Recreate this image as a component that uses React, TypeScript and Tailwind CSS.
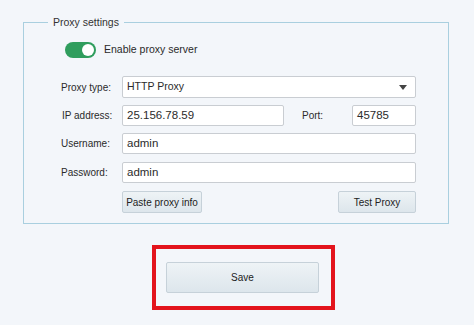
const font = { fontFamily: '"Liberation Sans", Arial, sans-serif' };

const Field = ({ value, className }: { value: string; className: string }) => (
    <div className={`h-[21px] bg-white border border-[#c9cdd2] rounded-[2px] flex items-center px-[4px] text-[11.5px] text-[#2b2b2b] ${className}`}>
        {value}
    </div>
);

const Btn = ({ label, className }: { label: string; className: string }) => (
    <div className={`flex items-center justify-center whitespace-nowrap border border-[#c6d1d9] rounded-[2px] bg-gradient-to-b from-[#eef3f6] to-[#dde6ec] text-[10px] text-[#222] ${className}`}>
        {label}
    </div>
);

const App = () => {
    return (
        <div className="w-[474px] h-[325px] bg-[#f3f6fa] pt-[15px] text-[10px] text-[#2a2a2a]" style={font}>
            <fieldset className="ml-[23px] w-[426px] h-[209px] border border-[#a9cfdf] p-0">
                <legend className="ml-[24px] px-[5px] leading-[14px] text-[10.5px] text-[#333]">Proxy settings</legend>

                <div className="flex items-center ml-[41px] mt-[13px] gap-[8px]">
                    <div className="w-[31px] h-[16px] rounded-full bg-[#2f9d5d] flex items-center justify-end pr-[2px]">
                        <div className="w-[12px] h-[12px] rounded-full bg-white"></div>
                    </div>
                    <span className="text-[10.5px]">Enable proxy server</span>
                </div>

                <div className="flex items-center ml-[37px] mt-[18px]">
                    <span className="w-[61px]">Proxy type:</span>
                    <div className="w-[294px] h-[22px] bg-white border border-[#c9cdd2] rounded-[2px] flex items-center justify-between px-[4px] text-[10.5px]">
                        <span>HTTP Proxy</span>
                        <svg width="8" height="5" viewBox="0 0 8 5" className="mr-[4px]">
                            <path d="M0 0 L8 0 L4 5 Z" fill="#444" />
                        </svg>
                    </div>
                </div>

                <div className="flex items-center ml-[37px] mt-[7px]">
                    <span className="w-[61px] pl-[1px]">IP address:</span>
                    <Field value="25.156.78.59" className="w-[162px]" />
                    <span className="ml-[18px] w-[50px]">Port:</span>
                    <Field value="45785" className="w-[64px]" />
                </div>

                <div className="flex items-center ml-[37px] mt-[7px]">
                    <span className="w-[61px]">Username:</span>
                    <Field value="admin" className="w-[294px]" />
                </div>

                <div className="flex items-center ml-[37px] mt-[8px]">
                    <span className="w-[61px]">Password:</span>
                    <Field value="admin" className="w-[294px]" />
                </div>

                <div className="flex items-center ml-[98px] mt-[8px] w-[294px] justify-between">
                    <Btn label="Paste proxy info" className="w-[80px] h-[22px]" />
                    <Btn label="Test Proxy" className="w-[78px] h-[22px]" />
                </div>
            </fieldset>

            <div className="ml-[152px] mt-[21px] w-[183px] h-[65px] border-[4px] border-[#e3141c] pl-[10px] pt-[13px]">
                <Btn label="Save" className="w-[153px] h-[31px]" />
            </div>
        </div>
    );
};

export default App;
